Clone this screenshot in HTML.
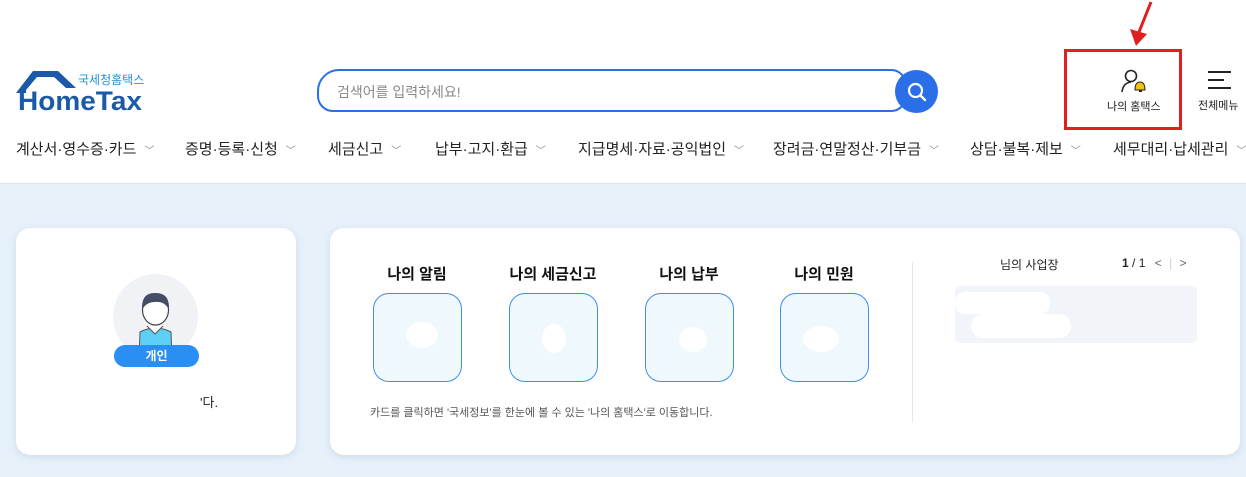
<!DOCTYPE html><html><head><meta charset="utf-8"><style>
*{margin:0;padding:0;box-sizing:border-box}
body{width:1246px;height:477px;overflow:hidden;background:#e7f1fa;font-family:"Liberation Sans","Noto Sans CJK KR",sans-serif;position:relative;color:#222}
.hdr{position:absolute;left:0;top:0;width:1246px;height:184px;background:#fff;border-bottom:1px solid #dde6ef}
.abs{position:absolute}
.nav{position:absolute;top:138px;font-size:15px;color:#222;white-space:nowrap}
.nav span{color:#888;font-size:10px;margin-left:8px}
.card{position:absolute;background:#fff;border-radius:14px;box-shadow:0 2px 8px rgba(150,180,210,.35)}
.t{position:absolute;font-size:15px;font-weight:bold;color:#111;text-align:center;width:130px}
.bx{position:absolute;top:293px;width:89px;height:89px;border:1.5px solid #3d8ef0;border-radius:16px;background:#eef8fd}
.bl{position:absolute;background:#fff;border-radius:50%}
</style></head><body>
<div class="hdr"></div>
<svg class="abs" style="left:14px;top:68px" width="135" height="46" viewBox="0 0 135 46">
<path d="M2 25 L19 3 L44 3 L62 20 L52 20 L40 9 L23 9 L12 22 L12 25 Z" fill="#1b5aa8"/>
<text x="64" y="16" font-size="12" fill="#2a8fd0" font-family="Noto Sans CJK KR,sans-serif">국세청홈택스</text>
<text x="4" y="42" font-size="27" font-weight="bold" fill="#1b5aa8" font-family="Liberation Sans,sans-serif" textLength="124" lengthAdjust="spacingAndGlyphs">HomeTax</text>
</svg>
<div class="abs" style="left:317px;top:69px;width:590px;height:43px;border:2px solid #2a6ee8;border-radius:22px 16px 16px 16px"></div>
<div class="abs" style="left:337px;top:82px;font-size:14px;color:#888">검색어를 입력하세요!</div>
<div class="abs" style="left:895px;top:70px;width:43px;height:43px;border-radius:50%;background:#2a6ee8"></div>
<svg class="abs" style="left:905px;top:80px" width="24" height="24" viewBox="0 0 24 24"><circle cx="10.5" cy="10.5" r="6.5" fill="none" stroke="#fff" stroke-width="2.2"/><path d="M15.5 15.5 L20 20" stroke="#fff" stroke-width="2.4" stroke-linecap="round"/></svg>
<svg class="abs" style="left:1125px;top:0" width="30" height="50"><path d="M26 2 L14 32" stroke="#e02020" stroke-width="3"/><path d="M5 29 L11 46 L22 34 Z" fill="#e02020"/></svg>
<div class="abs" style="left:1064px;top:49px;width:118px;height:81px;border:3px solid #e41e1e"></div>
<svg class="abs" style="left:1120px;top:68px" width="32" height="28" viewBox="0 0 32 28"><circle cx="11" cy="8" r="5.5" fill="none" stroke="#222" stroke-width="1.6"/><path d="M2 24 Q3 15 11 14" fill="none" stroke="#222" stroke-width="1.6"/><path d="M15 22 Q15 14 20 14 Q25 14 25 22 Z" fill="#f1c40f" stroke="#222" stroke-width="1"/><rect x="19" y="22" width="3" height="2" fill="#222"/></svg>
<div class="abs" style="left:1107px;top:98px;font-size:11px;color:#222">나의 홈택스</div>
<div class="abs" style="left:1208px;top:71px;width:23px;height:1.5px;background:#222"></div>
<div class="abs" style="left:1208px;top:79px;width:16px;height:1.5px;background:#222"></div>
<div class="abs" style="left:1208px;top:87px;width:23px;height:1.5px;background:#222"></div>
<div class="abs" style="left:1198px;top:97px;font-size:11px;color:#222">전체메뉴</div>
<div class="nav" style="left:16px">계산서·영수증·카드<span>﹀</span></div>
<div class="nav" style="left:185px">증명·등록·신청<span>﹀</span></div>
<div class="nav" style="left:328px">세금신고<span>﹀</span></div>
<div class="nav" style="left:435px">납부·고지·환급<span>﹀</span></div>
<div class="nav" style="left:578px">지급명세·자료·공익법인<span>﹀</span></div>
<div class="nav" style="left:773px">장려금·연말정산·기부금<span>﹀</span></div>
<div class="nav" style="left:970px">상담·불복·제보<span>﹀</span></div>
<div class="nav" style="left:1113px">세무대리·납세관리<span>﹀</span></div>
<div class="card" style="left:16px;top:228px;width:280px;height:227px"></div>
<div class="abs" style="left:113px;top:274px;width:85px;height:85px;border-radius:50%;background:#f1f2f6;overflow:hidden">
<svg width="85" height="85" viewBox="0 0 85 85"><path d="M26 85 L27 58 Q42 50 58 58 L59 85 Z" fill="#5cd1f5" stroke="#555" stroke-width="1"/><path d="M34 52 L42 60 L50 52" fill="#fff" stroke="#555"/><ellipse cx="42.5" cy="36" rx="13" ry="15" fill="#fff" stroke="#444" stroke-width="1.2"/><path d="M29 36 Q28 18 43 19 Q57 19 56 36 Q52 27 42 28 Q33 28 29 36Z" fill="#454c66"/></svg></div>
<div class="abs" style="left:114px;top:345px;width:85px;height:22px;border-radius:11px;background:#2a8ff5;color:#fff;font-size:12px;font-weight:bold;text-align:center;line-height:22px">개인</div>
<div class="abs" style="left:200px;top:392px;font-size:13px">'다.</div>
<div class="card" style="left:330px;top:228px;width:910px;height:227px"></div>
<div class="t" style="left:352px;top:263px">나의 알림</div>
<div class="t" style="left:488px;top:263px">나의 세금신고</div>
<div class="t" style="left:624px;top:263px">나의 납부</div>
<div class="t" style="left:759px;top:263px">나의 민원</div>
<div class="bx" style="left:373px"><div class="bl" style="left:32px;top:28px;width:32px;height:26px"></div></div>
<div class="bx" style="left:509px"><div class="bl" style="left:32px;top:30px;width:24px;height:29px"></div></div>
<div class="bx" style="left:645px"><div class="bl" style="left:33px;top:33px;width:28px;height:25px"></div></div>
<div class="bx" style="left:780px"><div class="bl" style="left:22px;top:32px;width:36px;height:26px"></div></div>
<div class="abs" style="left:370px;top:404px;font-size:11px;color:#555">카드를 클릭하면 '국세정보'를 한눈에 볼 수 있는 '나의 홈택스'로 이동합니다.</div>
<div class="abs" style="left:912px;top:262px;width:1px;height:160px;background:#e2e5ea"></div>
<div class="abs" style="left:1000px;top:256px;font-size:12px;color:#222">님의 사업장</div>
<div class="abs" style="left:1122px;top:256px;font-size:12px;color:#222"><b>1</b> / 1 <span style="color:#666;margin-left:6px">&lt;</span> <span style="color:#ccc;margin:0 4px">|</span> <span style="color:#666">&gt;</span></div>
<div class="abs" style="left:955px;top:286px;width:242px;height:57px;border-radius:5px;background:#f1f5fa"><div class="bl" style="left:0;top:6px;width:95px;height:22px;border-radius:10px"></div><div class="bl" style="left:16px;top:28px;width:100px;height:24px;border-radius:12px"></div></div>
</body></html>
